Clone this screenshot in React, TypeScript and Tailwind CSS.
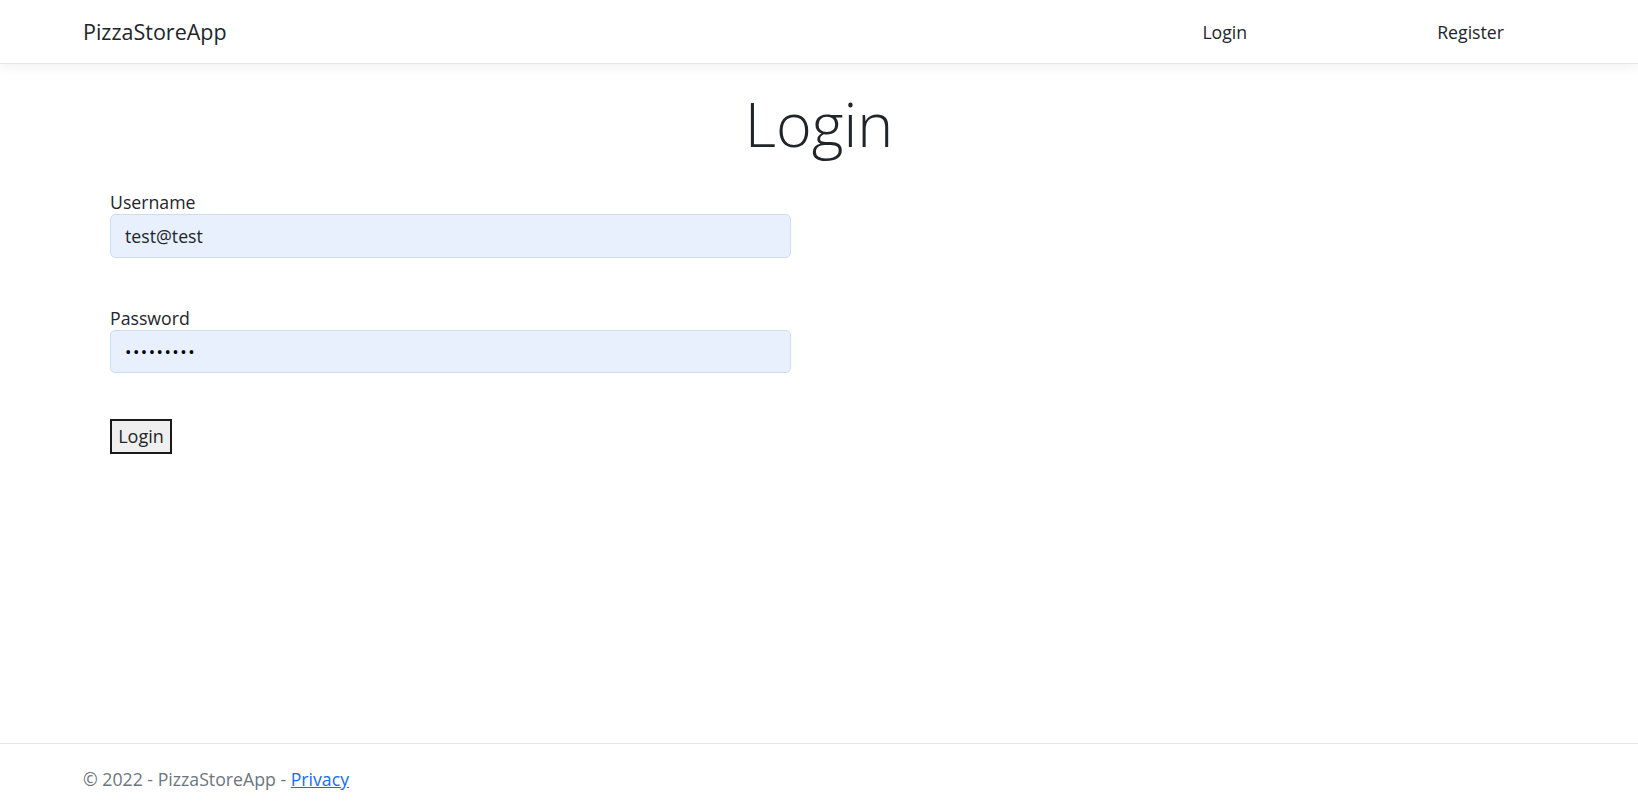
const font = { fontFamily: '"Segoe UI", "Open Sans", "Liberation Sans", sans-serif' };

function NavBar() {
  return (
    <header className="relative z-10 flex h-[64px] shrink-0 items-center border-b border-[#e5e5e5] bg-white pl-[83px] pr-[134px] pt-[2px] shadow-[0_4px_10px_rgba(0,0,0,0.05)]">
      <a href="#" className="text-[21.5px] text-[#212529]">
        PizzaStoreApp
      </a>
      <nav className="ml-auto flex items-center gap-[190px] text-[17.7px] text-[#212529]">
        <a href="#">Login</a>
        <a href="#">Register</a>
      </nav>
    </header>
  );
}

function LoginForm() {
  return (
    <form className="flex w-[681px] flex-col pl-[110px] box-content" onSubmit={(e) => e.preventDefault()}>
      <label className="text-[17.7px] leading-[24px] text-[#212529]">Username</label>
      <input
        type="text"
        defaultValue="test@test"
        className="h-[44px] w-[681px] rounded-[5px] border border-[#cfdcef] bg-[#e8f0fe] px-[14px] text-[17.7px] text-[#212529] outline-none"
      />
      <label className="mt-[48px] text-[17.7px] leading-[24px] text-[#212529]">Password</label>
      <input
        type="password"
        defaultValue="123456789"
        className="h-[43px] w-[681px] rounded-[5px] border border-[#cfdcef] bg-[#e8f0fe] px-[14px] text-[17px] tracking-[1.5px] text-black outline-none"
      />
      <div className="mt-[46px]">
        <button
          type="submit"
          className="h-[35px] w-[62px] border-2 border-[#1a1a1a] bg-[#efefef] text-[18px] text-[#212529]"
        >
          Login
        </button>
      </div>
    </form>
  );
}

export default function App() {
  return (
    <div className="flex min-h-screen flex-col bg-white" style={font}>
      <NavBar />
      <main className="flex-1">
        <h1 className="mt-[23px] text-center text-[61px] font-light leading-[1.2] text-[#212529]">Login</h1>
        <div className="mt-[30px]">
          <LoginForm />
        </div>
      </main>
      <footer className="flex h-[67px] shrink-0 items-center border-t border-[#e5e5e5] pl-[83px] pt-[4px] text-[17.7px] text-[#6c757d]">
        <span>
          © 2022 - PizzaStoreApp -{" "}
          <a href="#" className="text-[#0d6efd] underline">
            Privacy
          </a>
        </span>
      </footer>
    </div>
  );
}
